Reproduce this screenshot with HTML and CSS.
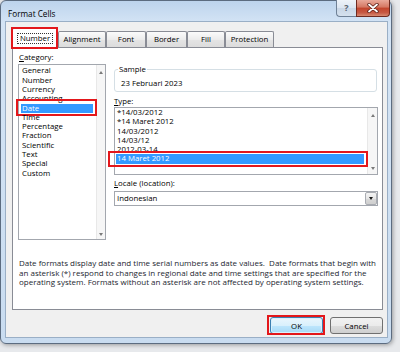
FILE: index.html
```html
<!DOCTYPE html>
<html>
<head>
<meta charset="utf-8">
<title>Format Cells</title>
<link rel="stylesheet" href="styles.css">
</head>
<body>
<div class="window">
  <div class="titlebar">
    <span class="title">Format Cells</span>
    <div class="caption">
      <div class="cap-help">?</div>
      <div class="cap-close">
        <svg width="12" height="10" viewBox="0 0 12 10"><path d="M2 1.5 L10 8.5 M10 1.5 L2 8.5" stroke="#5a1e16" stroke-width="3.4" stroke-linecap="round"/><path d="M2 1.5 L10 8.5 M10 1.5 L2 8.5" stroke="#ffffff" stroke-width="1.8" stroke-linecap="round"/></svg>
      </div>
    </div>
  </div>
  <div class="client">
    <div class="tabs">
      <div class="tab active annot-tab"><span class="focus">Number</span></div>
      <div class="tab w-align">Alignment</div>
      <div class="tab w-font">Font</div>
      <div class="tab w-border">Border</div>
      <div class="tab w-fill">Fill</div>
      <div class="tab w-prot">Protection</div>
    </div>
    <div class="panel">
      <div class="cols">
        <div class="left">
          <div class="label"><u>C</u>ategory:</div>
          <div class="listbox cat">
            <ul class="items">
              <li>General</li>
              <li>Number</li>
              <li>Currency</li>
              <li>Accounting</li>
              <li class="sel annot-date">Date</li>
              <li>Time</li>
              <li>Percentage</li>
              <li>Fraction</li>
              <li>Scientific</li>
              <li>Text</li>
              <li>Special</li>
              <li>Custom</li>
            </ul>
            <div class="vscroll"><span class="arr up"></span><span class="arr down"></span></div>
          </div>
        </div>
        <div class="right">
          <fieldset class="sample">
            <legend>Sample</legend>
            <div class="sample-val">23 Februari 2023</div>
          </fieldset>
          <div class="label type-label"><u>T</u>ype:</div>
          <div class="listbox type">
            <ul class="items">
              <li>*14/03/2012</li>
              <li>*14 Maret 2012</li>
              <li>14/03/2012</li>
              <li>14/03/12</li>
              <li>2012-03-14</li>
              <li class="sel annot-type">14 Maret 2012</li>
            </ul>
            <div class="vscroll"><span class="arr up"></span><span class="arr down"></span></div>
          </div>
          <div class="label locale-label"><u>L</u>ocale (location):</div>
          <div class="combo">
            <span class="combo-text">Indonesian</span>
            <span class="drop"><span class="arr down dark"></span></span>
          </div>
        </div>
      </div>
      <p class="desc">Date formats display date and time serial numbers as date values.&nbsp; Date formats that begin with<br>an asterisk (*) respond to changes in regional date and time settings that are specified for the<br>operating system. Formats without an asterisk are not affected by operating system settings.</p>
    </div>
    <div class="buttons">
      <button class="btn ok annot-ok">OK</button>
      <button class="btn">Cancel</button>
    </div>
  </div>
</div>
</body>
</html>
```

FILE: styles.css
```css
* { box-sizing: border-box; }
html, body { margin: 0; padding: 0; }
body {
  width: 400px;
  height: 352px;
  overflow: hidden;
  background: #e7e9ec;
  font-family: "Open Sans", "Noto Sans", sans-serif;
  font-size: 7.8px;
  color: #000;
}
.window {
  width: 392px;
  height: 344px;
  border: 1px solid #5c6c80;
  border-radius: 6px;
  background: linear-gradient(#bdd4ed, #d4e4f5 22px, #c9dcf0);
  display: flex;
  flex-direction: column;
  box-shadow: 1px 1px 4px rgba(0,0,0,0.35);
}
.titlebar {
  height: 20px;
  display: flex;
  align-items: flex-start;
  padding-left: 7px;
}
.title {
  font-size: 8.2px;
  line-height: 12px;
  margin-top: 7px;
  color: #000;
}
.caption {
  margin-left: auto;
  margin-right: 1px;
  display: flex;
  margin-top: -1px;
}
.cap-help {
  width: 20px;
  height: 17px;
  border: 1px solid #6f8196;
  border-top: none;
  border-right: none;
  border-radius: 0 0 0 4px;
  background: linear-gradient(#eef3f9, #dbe5f1 50%, #c9d6e6 51%, #d5e1ee);
  color: #56616e;
  font-size: 9px;
  line-height: 15px;
  text-align: center;
  font-weight: bold;
}
.cap-close {
  width: 34px;
  height: 17px;
  border: 1px solid #6e2a20;
  border-top: none;
  border-radius: 0 0 4px 0;
  background: linear-gradient(#e9a99a, #d47762 45%, #c2442c 50%, #c75a45 80%, #d88c73);
  display: flex;
  align-items: center;
  justify-content: center;
}
.client {
  flex: 1;
  margin: 0 3px 5px 4px;
  border: 1px solid #9aafc6;
  background: #f0f0f0;
  display: flex;
  flex-direction: column;
}
.tabs {
  display: flex;
  align-items: flex-end;
  padding: 6px 0 0 6px;
  height: 25px;
  position: relative;
  z-index: 2;
}
.tab {
  height: 16px;
  border: 1px solid #898c95;
  border-bottom: none;
  border-radius: 2px 2px 0 0;
  background: linear-gradient(#fbfbfb, #ececec 50%, #e4e4e4 51%, #dcdcdc);
  text-align: center;
  line-height: 14px;
  white-space: nowrap;
}
.w-align { width: 48px; }
.w-font { width: 40px; }
.w-border { width: 41px; }
.w-fill { width: 38px; }
.w-prot { width: 49px; }
.tab.active {
  width: 46px;
  height: 20px;
  margin-bottom: -1px;
  background: #fff;
  display: flex;
  justify-content: center;
  align-items: flex-start;
  padding-top: 4px;
  position: relative;
}
.focus {
  display: inline-block;
  border: 1px dotted #333;
  padding: 0 2px;
  line-height: 9px;
}
.annot-tab::after {
  content: "";
  position: absolute;
  left: -2px; top: -2px; right: -1px; bottom: -1px;
  border: 2px solid #e3171b;
}
.panel {
  margin: 0 4px 0 6px;
  height: 263px;
  border: 1px solid #898c95;
  background: #fff;
  position: relative;
  z-index: 1;
}
.cols {
  display: flex;
  gap: 8px;
  padding: 0 4px 0 5px;
}
.left {
  width: 88px;
  padding-top: 4px;
}
.label {
  line-height: 10px;
  white-space: nowrap;
}
.left .label { margin-bottom: 2px; padding-left: 1px; }
.listbox {
  display: flex;
  border: 1px solid #a3a7ae;
  background: #fff;
}
.listbox.cat { height: 176px; }
.listbox .items {
  flex: 1;
  list-style: none;
  margin: 0;
}
.cat .items { padding: 1.4px 3px 0 2px; }
.items li {
  line-height: 9.3px;
  padding-left: 1px;
  white-space: nowrap;
  position: relative;
}
.items li.sel {
  background: #3399ff;
  color: #fff;
}
.vscroll {
  display: flex;
  flex-direction: column;
  justify-content: space-between;
  align-items: center;
  background: #f6f6f6;
  border-left: 1px solid #e8e8e8;
}
.cat .vscroll { width: 9px; padding: 6px 0 3px; }
.type .vscroll { width: 10px; padding: 6px 0 4px; }
.arr {
  width: 0;
  height: 0;
  border-left: 2.5px solid transparent;
  border-right: 2.5px solid transparent;
}
.arr.up { border-bottom: 3px solid #7a7a7a; }
.arr.down { border-top: 3px solid #7a7a7a; }
.arr.down.dark { border-top-color: #1a1a1a; }
.annot-date::after {
  content: "";
  position: absolute;
  left: -5px; right: -4px; top: -5px; bottom: -3px;
  border: 2px solid #e3171b;
}
.right {
  width: 264px;
  padding-top: 16px;
}
.sample {
  margin: 0 1px 0 0;
  padding: 0 0 0 6px;
  border: 1px solid #d5dfe5;
  border-radius: 3px;
  min-width: 0;
}
.sample legend {
  padding: 0 1px;
  margin-left: -3px;
  line-height: 10px;
}
.sample-val {
  line-height: 16px;
  padding-top: 1px;
}
.type-label { margin-top: 4px; margin-bottom: 1px; }
.listbox.type { height: 68px; }
.type .items { padding: 0 3px 0 1px; }
.annot-type::after {
  content: "";
  position: absolute;
  left: -8px; right: -4px; top: -3px; bottom: -3px;
  border: 2px solid #e3171b;
}
.locale-label { margin-top: 3px; margin-bottom: 3px; }
.combo {
  height: 15px;
  border: 1px solid #a3a7ae;
  display: flex;
  align-items: center;
  padding-left: 2px;
}
.combo-text { flex: 1; line-height: 13px; }
.drop {
  width: 12px;
  height: 13px;
  border: 1px solid #a9acb2;
  border-radius: 2px;
  background: linear-gradient(#f4f4f4, #e6e6e6 50%, #d9d9d9 51%, #cfcfcf);
  display: flex;
  align-items: center;
  justify-content: center;
}
.desc {
  margin: 18px 0 0 0;
  padding-left: 6px;
  font-size: 8px;
  line-height: 9.5px;
  color: #1c2630;
  white-space: nowrap;
}
.buttons {
  display: flex;
  justify-content: flex-end;
  gap: 7px;
  margin-top: 7px;
  padding-right: 4px;
}
.btn {
  width: 53px;
  height: 17px;
  border: 1px solid #707070;
  border-radius: 3px;
  background: linear-gradient(#f2f2f2, #ebebeb 50%, #dddddd 51%, #cfcfcf);
  font-family: "Open Sans", "Noto Sans", sans-serif;
  font-size: 7.8px;
  color: #000;
  padding: 0;
  position: relative;
}
.btn.ok {
  border-color: #3c7fb1;
  background: linear-gradient(#eaf6fd, #d9f0fc 50%, #bee6fd 51%, #a7d9f5);
  box-shadow: inset 0 0 0 1px #d8f0fc;
}
.annot-ok::after {
  content: "";
  position: absolute;
  left: -4px; right: -3px; top: -3px; bottom: -2px;
  border: 2px solid #e3171b;
}
```
